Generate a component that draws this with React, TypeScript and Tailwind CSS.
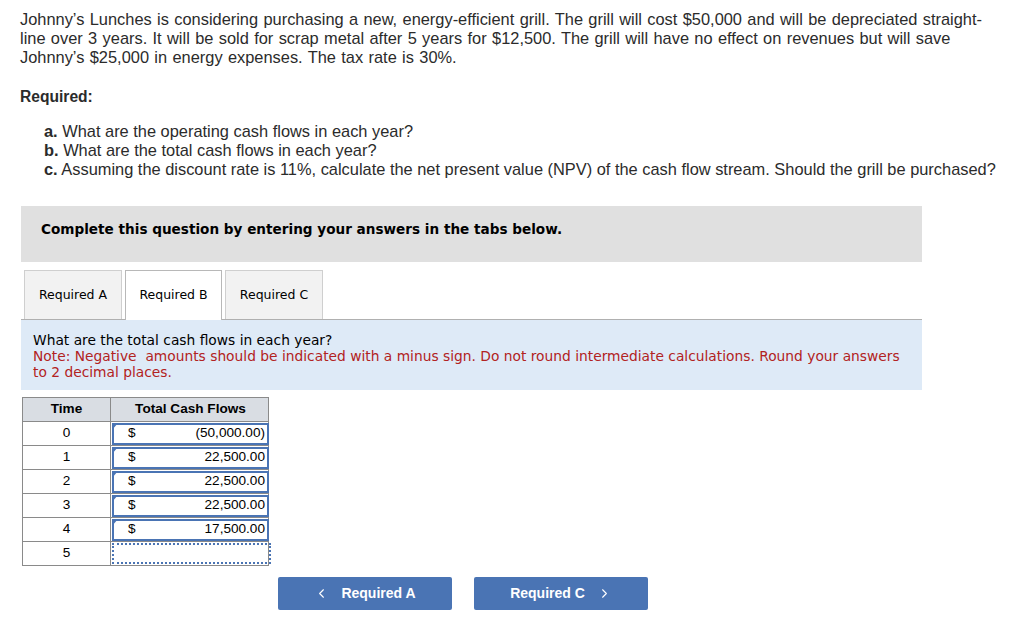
import React from "react";
import { ChevronLeft, ChevronRight } from "lucide-react";

const rows = [
  { t: "0", v: "(50,000.00)" },
  { t: "1", v: "22,500.00" },
  { t: "2", v: "22,500.00" },
  { t: "3", v: "22,500.00" },
  { t: "4", v: "17,500.00" },
];

function AnswerCell({ value }: { value: string }) {
  return (
    <div className="relative h-[22px] mx-[1px] border-2 border-[#4a74b4] bg-white flex items-center justify-between pl-[14px] pr-[2px]">
      {/* little marker in the corner */}
      <span className="absolute -left-[2px] -top-[2px] w-0 h-0 border-t-[7px] border-t-[#4a74b4] border-r-[6px] border-r-transparent" />
      <span>$</span>
      <span>{value}</span>
    </div>
  );
}

export default function App() {
  return (
    <div className="w-[1024px] h-[620px] bg-white overflow-hidden text-[#222]">
      <div className="pl-5 pt-[10px] font-['Liberation_Sans','Arial',sans-serif] text-[16.4px] leading-[19px] text-[#2b2b2b]">
        <p className="whitespace-nowrap [word-spacing:0.8px]">
          Johnny’s Lunches is considering purchasing a new, energy-efficient grill. The grill will cost $50,000 and will be depreciated straight-
          <br />
          line over 3 years. It will be sold for scrap metal after 5 years for $12,500. The grill will have no effect on revenues but will save
          <br />
          Johnny’s $25,000 in energy expenses. The tax rate is 30%.
        </p>
        <p className="mt-[20px] font-bold text-[15.6px]">Required:</p>
        <div className="mt-[16px] pl-6 whitespace-nowrap">
          <p><b>a.</b> What are the operating cash flows in each year?</p>
          <p><b>b.</b> What are the total cash flows in each year?</p>
          <p><b>c.</b> Assuming the discount rate is 11%, calculate the net present value (NPV) of the cash flow stream. Should the grill be purchased?</p>
        </div>
      </div>

      <div className="ml-[21px] w-[901px] font-['DejaVu_Sans','Verdana',sans-serif]">
        <div className="mt-[27px] h-[56px] bg-[#e0e0e0] pt-[13px] pl-5 text-[13.6px] font-bold text-black">
          Complete this question by entering your answers in the tabs below.
        </div>

        <div className="mt-[8px] flex gap-[3px] pl-[3px] border-b border-[#b0b0b0] text-[12.5px] text-black">
          <div className="w-[98px] h-[49px] bg-[#f2f2f2] border border-b-0 border-[#cfcfcf] flex items-center justify-center">Required A</div>
          <div className="w-[97px] h-[50px] -mb-px bg-white border border-b-0 border-[#b8b8b8] flex items-center justify-center">Required B</div>
          <div className="w-[98px] h-[49px] bg-[#f2f2f2] border border-b-0 border-[#cfcfcf] flex items-center justify-center">Required C</div>
        </div>

        <div className="h-[70px] bg-[#deeaf7] px-3 pt-[12px] text-[13.8px] leading-[16px]">
          <p className="text-black">What are the total cash flows in each year?</p>
          <p className="text-[#b22222]">
            Note: Negative&nbsp; amounts should be indicated with a minus sign. Do not round intermediate calculations. Round your answers to 2 decimal places.
          </p>
        </div>
      </div>

      <div className="ml-[22px] mt-[7px] w-[247px] font-['Liberation_Sans','Arial',sans-serif] text-[13.6px] text-black">
        <div className="grid grid-cols-[88px_159px] border border-[#8a8a8a] bg-[#d9dde3] h-[25px] font-bold">
          <div className="flex items-center justify-center border-r border-[#8a8a8a]">Time</div>
          <div className="flex items-center justify-center">Total Cash Flows</div>
        </div>
        {rows.map((r) => (
          <div key={r.t} className="grid grid-cols-[88px_159px] h-[24px] border-x border-b border-[#8a8a8a]">
            <div className="flex items-center justify-center border-r border-[#8a8a8a]">{r.t}</div>
            <div className="flex items-center">
              <div className="w-full"><AnswerCell value={r.v} /></div>
            </div>
          </div>
        ))}
        <div className="grid grid-cols-[88px_159px] h-[24px] border-x border-b border-[#8a8a8a]">
          <div className="flex items-center justify-center border-r border-[#8a8a8a]">5</div>
          <div className="m-[1px] border-2 border-dotted border-[#4a74b4] -mr-[1px]" />
        </div>
      </div>

      <div className="mt-[11px] ml-[278px] flex gap-[22px] font-['Liberation_Sans','Arial',sans-serif] text-[14px] font-bold text-white">
        <div className="w-[174px] h-[33px] rounded-[2px] bg-[#4a74b4] flex items-center justify-center gap-[12px]">
          <ChevronLeft size={15} strokeWidth={1.75} />
          <span>Required A</span>
        </div>
        <div className="w-[174px] h-[33px] rounded-[2px] bg-[#4a74b4] flex items-center justify-center gap-[12px]">
          <span>Required C</span>
          <ChevronRight size={15} strokeWidth={1.75} />
        </div>
      </div>
    </div>
  );
}
